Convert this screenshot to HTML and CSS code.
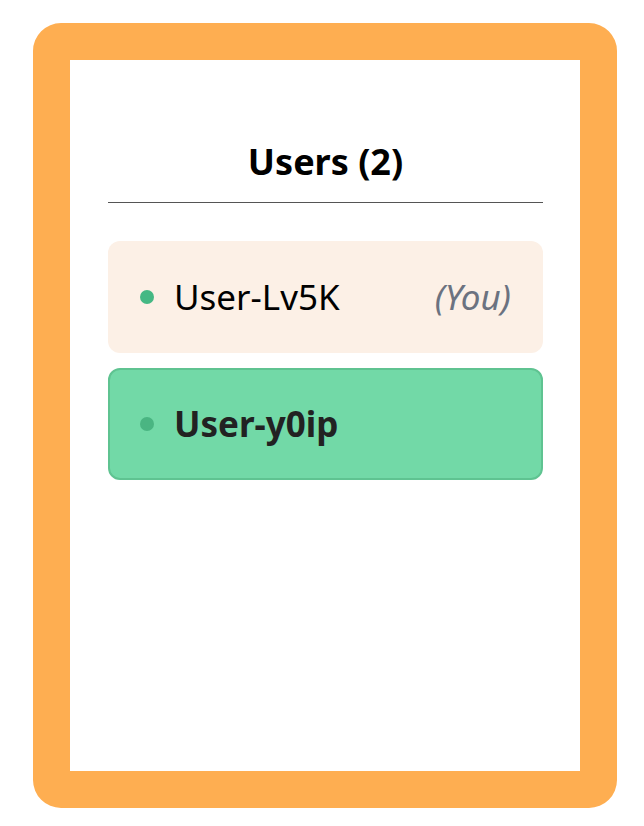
FILE: index.html
```html
<!DOCTYPE html>
<html lang="en">
<head>
    <meta charset="UTF-8">
    <meta name="viewport" content="width=device-width, initial-scale=1.0">
    <title>Users</title>
    <link rel="stylesheet" href="styles.css">
</head>
<body>

    <!-- Panel de usuarios -->
    <div class="frame">
        <div class="users-panel">
            <h2 class="users-title">Users (2)</h2>

            <ul class="user-list">
                <li class="user-item me">
                    <span class="dot"></span>
                    <span class="user-name">User-Lv5K</span>
                    <span class="you">(You)</span>
                </li>
                <li class="user-item active">
                    <span class="dot"></span>
                    <span class="user-name">User-y0ip</span>
                </li>
            </ul>
        </div>
    </div>

</body>
</html>
```

FILE: styles.css
```css
/* Estilo global */
body {
    margin: 0;
    font-family: "Noto Sans", "Open Sans", sans-serif;
    background: #ffffff;
    color: #000000;
}

/* Marco naranja */
.frame {
    margin: 23px 0 0 33px;
    width: 510px;
    height: 711px;
    border: 37px solid #feae51;
    border-radius: 28px;
    background: #ffffff;
}

.users-panel {
    padding: 38px 37px 38px 38px;
}

.users-title {
    margin: 40px 0 0;
    padding-bottom: 16px;
    font-size: 36px;
    line-height: 48px;
    font-weight: bold;
    text-align: center;
    border-bottom: 1px solid #555555;
}

/* Lista */
.user-list {
    list-style: none;
    margin: 38px 0 0;
    padding: 0;
    display: flex;
    flex-direction: column;
    gap: 15px;
}

.user-item {
    display: flex;
    align-items: center;
    gap: 20px;
    padding: 30px;
    border: 2px solid transparent;
    border-radius: 12px;
    font-size: 35px;
    line-height: 48px;
}

.user-item.me {
    background: #fcf0e6;
}

.user-item.active {
    background: #72d9a7;
    border-color: #5fc391;
    color: #222222;
    font-weight: bold;
}

.dot {
    width: 14px;
    height: 14px;
    border-radius: 50%;
    background: #45b884;
    flex-shrink: 0;
}

.user-item.active .dot {
    background: #4ab582;
}

.you {
    margin-left: auto;
    font-style: italic;
    color: #6b7280;
}
```
